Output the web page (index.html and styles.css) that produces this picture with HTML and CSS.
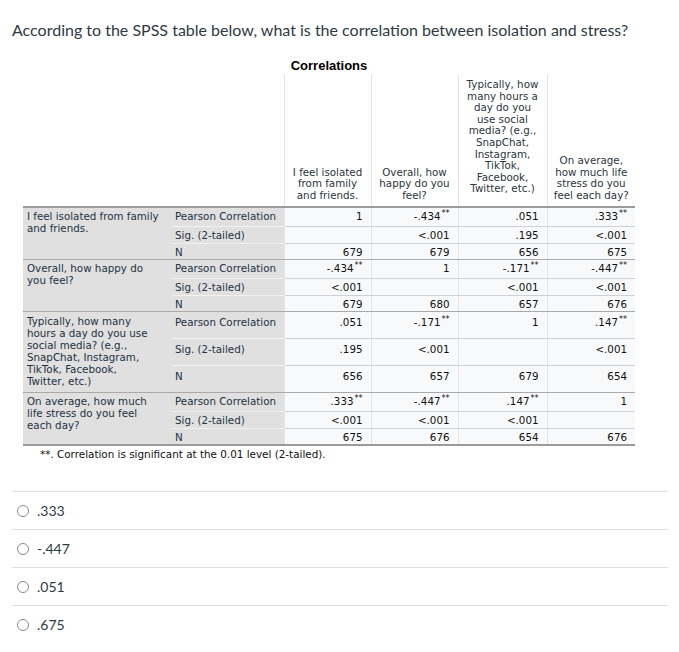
FILE: index.html
```html
<!DOCTYPE html>
<html>
<head>
<meta charset="utf-8">
<link rel="stylesheet" href="styles.css">
</head>
<body>
<div class="page">
  <p class="question">According to the SPSS table below, what is the correlation between isolation and stress?</p>
  <div class="spss">
    <div class="spss-title">Correlations</div>
    <table class="corr">
      <colgroup>
        <col class="c-rl"><col class="c-st"><col class="c-a"><col class="c-b"><col class="c-c"><col class="c-d">
      </colgroup>
      <thead>
        <tr>
          <th class="blank"></th>
          <th class="blank"></th>
          <th class="hd">I feel isolated<br>from family<br>and friends.</th>
          <th class="hd">Overall, how<br>happy do you<br>feel?</th>
          <th class="hd hd-tall">Typically, how<br>many hours a<br>day do you<br>use social<br>media? (e.g.,<br>SnapChat,<br>Instagram,<br>TikTok,<br>Facebook,<br>Twitter, etc.)</th>
          <th class="hd">On average,<br>how much life<br>stress do you<br>feel each day?</th>
        </tr>
      </thead>
      <tbody>
        <tr class="p">
          <td class="rl" rowspan="3">I feel isolated from family<br>and friends.</td>
          <td class="st">Pearson Correlation</td>
          <td class="v">1</td>
          <td class="v">-.434<sup>**</sup></td>
          <td class="v">.051</td>
          <td class="v">.333<sup>**</sup></td>
        </tr>
        <tr class="s">
          <td class="st">Sig. (2-tailed)</td>
          <td class="v"></td>
          <td class="v">&lt;.001</td>
          <td class="v">.195</td>
          <td class="v">&lt;.001</td>
        </tr>
        <tr class="n end">
          <td class="st">N</td>
          <td class="v">679</td>
          <td class="v">679</td>
          <td class="v">656</td>
          <td class="v">675</td>
        </tr>

        <tr class="p">
          <td class="rl" rowspan="3">Overall, how happy do<br>you feel?</td>
          <td class="st">Pearson Correlation</td>
          <td class="v">-.434<sup>**</sup></td>
          <td class="v">1</td>
          <td class="v">-.171<sup>**</sup></td>
          <td class="v">-.447<sup>**</sup></td>
        </tr>
        <tr class="s">
          <td class="st">Sig. (2-tailed)</td>
          <td class="v">&lt;.001</td>
          <td class="v"></td>
          <td class="v">&lt;.001</td>
          <td class="v">&lt;.001</td>
        </tr>
        <tr class="n end">
          <td class="st">N</td>
          <td class="v">679</td>
          <td class="v">680</td>
          <td class="v">657</td>
          <td class="v">676</td>
        </tr>

        <tr class="tall">
          <td class="rl" rowspan="3">Typically, how many<br>hours a day do you use<br>social media? (e.g.,<br>SnapChat, Instagram,<br>TikTok, Facebook,<br>Twitter, etc.)</td>
          <td class="st">Pearson Correlation</td>
          <td class="v">.051</td>
          <td class="v">-.171<sup>**</sup></td>
          <td class="v">1</td>
          <td class="v">.147<sup>**</sup></td>
        </tr>
        <tr class="tall">
          <td class="st">Sig. (2-tailed)</td>
          <td class="v">.195</td>
          <td class="v">&lt;.001</td>
          <td class="v"></td>
          <td class="v">&lt;.001</td>
        </tr>
        <tr class="tall end">
          <td class="st">N</td>
          <td class="v">656</td>
          <td class="v">657</td>
          <td class="v">679</td>
          <td class="v">654</td>
        </tr>

        <tr class="p">
          <td class="rl last" rowspan="3">On average, how much<br>life stress do you feel<br>each day?</td>
          <td class="st">Pearson Correlation</td>
          <td class="v">.333<sup>**</sup></td>
          <td class="v">-.447<sup>**</sup></td>
          <td class="v">.147<sup>**</sup></td>
          <td class="v">1</td>
        </tr>
        <tr class="s">
          <td class="st">Sig. (2-tailed)</td>
          <td class="v">&lt;.001</td>
          <td class="v">&lt;.001</td>
          <td class="v">&lt;.001</td>
          <td class="v"></td>
        </tr>
        <tr class="n final">
          <td class="st">N</td>
          <td class="v">675</td>
          <td class="v">676</td>
          <td class="v">654</td>
          <td class="v">676</td>
        </tr>
      </tbody>
    </table>
    <div class="footnote">**. Correlation is significant at the 0.01 level (2-tailed).</div>
  </div>

  <div class="options">
    <div class="opt"><span class="radio"></span><span class="opt-text">.333</span></div>
    <div class="opt"><span class="radio"></span><span class="opt-text">-.447</span></div>
    <div class="opt"><span class="radio"></span><span class="opt-text">.051</span></div>
    <div class="opt"><span class="radio"></span><span class="opt-text">.675</span></div>
  </div>
</div>
</body>
</html>
```

FILE: styles.css
```css
html, body {
  margin: 0;
  padding: 0;
  background: #ffffff;
}

body {
  font-family: Lato, "Liberation Sans", sans-serif;
  color: #2d3b45;
}

.page {
  padding: 20px 11px 0 12px;
}

.question {
  margin: 0;
  font-size: 16px;
  line-height: 20px;
}

.spss {
  margin: 18px 0 0 11px;
  width: 612px;
}

.spss-title {
  font-family: "Liberation Sans", Arial, sans-serif;
  font-weight: bold;
  font-size: 13px;
  line-height: 15px;
  color: #000;
  text-align: center;
  margin-bottom: 2px;
}

table.corr {
  border-collapse: collapse;
  table-layout: fixed;
  width: 612px;
  font-family: "DejaVu Sans", Verdana, sans-serif;
  font-size: 10.3px;
  line-height: 12px;
  color: #1b2733;
}

.c-rl { width: 149px; }
.c-st { width: 112px; }
.c-a { width: 87px; }
.c-b { width: 87px; }
.c-c { width: 89px; }
.c-d { width: 88px; }

thead th {
  height: 127px;
  padding: 0 1px 4px;
  font-weight: normal;
  line-height: 11.8px;
  vertical-align: bottom;
  text-align: center;
  border-bottom: 2px solid #9b9b9b;
  background: #fff;
}

thead th.hd {
  border-left: 1px solid #e3e3e3;
  color: #2a3540;
}

thead th.hd-tall {
  height: 120px;
  line-height: 11.6px;
  padding-bottom: 11px;
}

tbody td {
  padding: 2px 0 0;
  vertical-align: top;
}

tr.p td { height: 16px; }
tr.s td { height: 14px; }
tr.n td { height: 13px; }

tr.tall td {
  padding-top: 4px;
  height: 22px;
}

td.rl {
  background: #e0e0e0;
  padding: 2px 4px 0;
  border-bottom: 1px solid #a9a9a9;
  color: #22313f;
}

tr.tall td.rl {
  padding-top: 3px;
}

td.st {
  background: #e0e0e0;
  padding-left: 3px;
  border-bottom: 1px solid #f2f2f2;
  color: #22313f;
}

td.v {
  background: #f8f9fa;
  text-align: right;
  padding-right: 8px;
  border-left: 1px solid #e3e5e7;
  border-bottom: 1px solid #cdd1d5;
  color: #111;
}

tr.end td.st,
tr.end td.v {
  border-bottom: 1px solid #a9a9a9;
}

tr.final td.st,
tr.final td.v,
td.rl.last {
  border-bottom: 2px solid #9b9b9b;
}

sup {
  font-size: 8px;
  line-height: 0;
  vertical-align: 4px;
  margin-left: 1px;
}

.footnote {
  font-family: "DejaVu Sans", Verdana, sans-serif;
  font-size: 10.4px;
  line-height: 12px;
  color: #111;
  margin-top: 2px;
  padding-left: 17px;
}

.options {
  margin-top: 31px;
  width: 656px;
}

.opt {
  display: flex;
  align-items: center;
  gap: 8px;
  height: 37px;
  padding-left: 5px;
  border-top: 1px solid #dedede;
}

.radio {
  width: 12px;
  height: 12px;
  box-sizing: border-box;
  border: 1px solid #8a8a8a;
  border-radius: 50%;
  background: #fff;
  flex: none;
}

.opt-text {
  font-size: 14px;
  line-height: 18px;
  color: #2d3b45;
}
```
